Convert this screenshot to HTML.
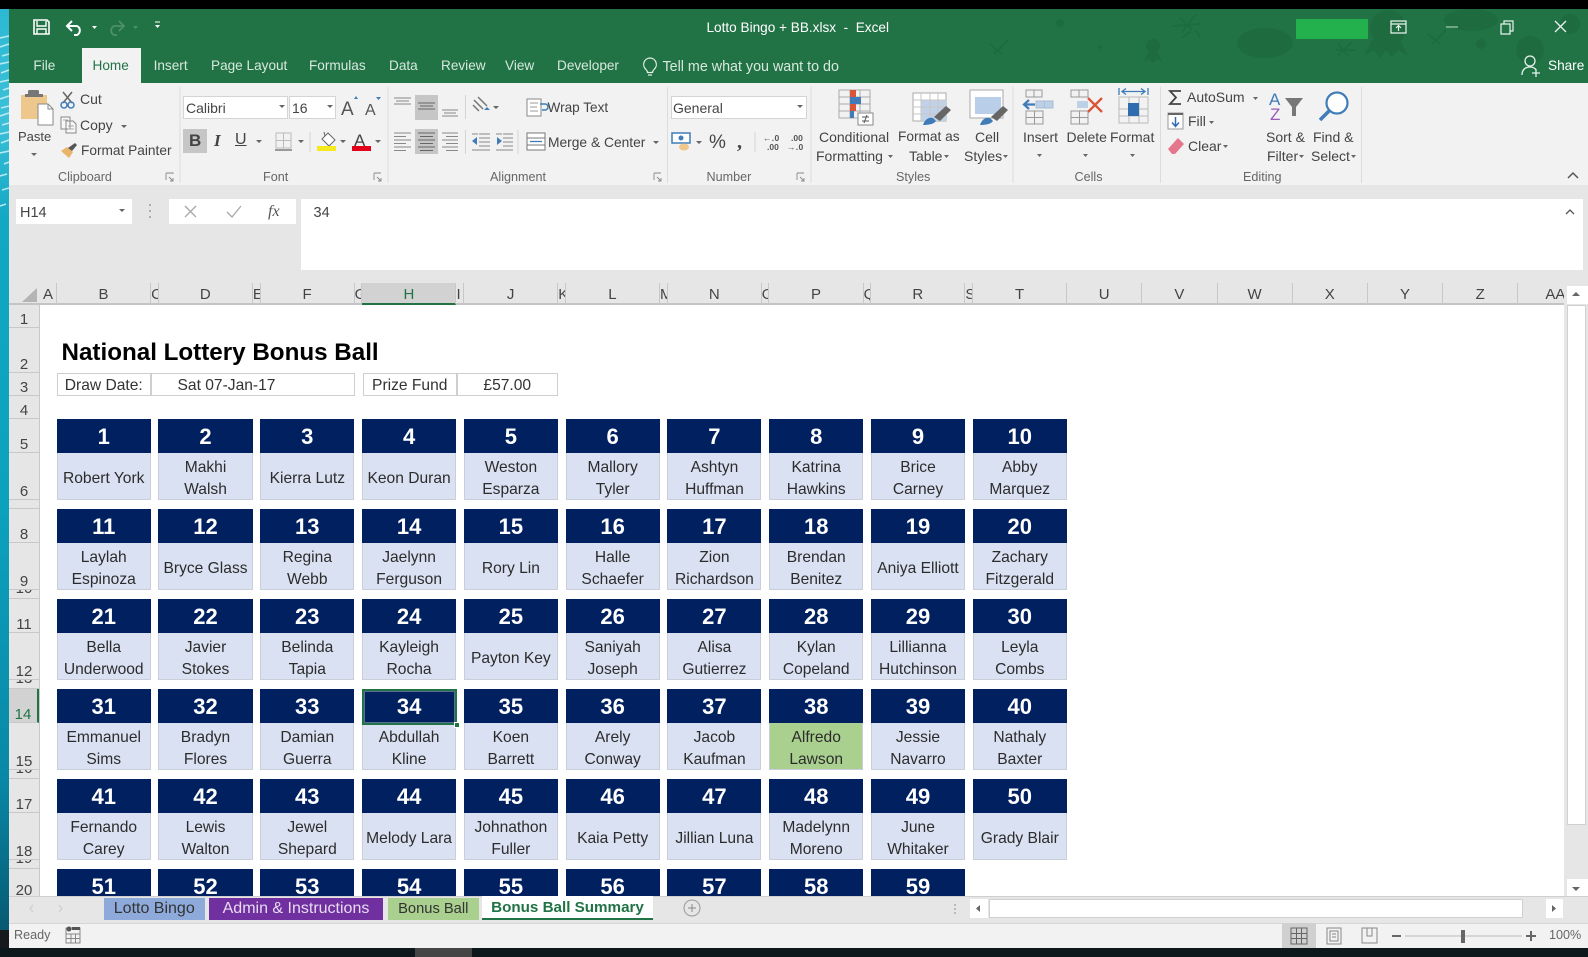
<!DOCTYPE html>
<html><head><meta charset="utf-8"><title>Lotto Bingo + BB.xlsx - Excel</title>
<style>
*{box-sizing:border-box}
html,body{margin:0;padding:0;width:1588px;height:957px;overflow:hidden;background:#000;font-family:"Liberation Sans",sans-serif}
#root{position:relative;width:1588px;height:957px;overflow:hidden;filter:blur(.35px)}
.a{position:absolute}
.t{position:absolute;white-space:nowrap;font-size:14px;line-height:18px;color:#444}
.w{color:#fff}.g{color:#d8e8de}
.l{font-size:12.6px;color:#666}
.k{font-size:13.6px}
#heads{position:absolute;left:40px;top:283px;width:1524px;height:22px;display:flex;overflow:hidden;background:#e6e6e6}
#heads div{flex:none;text-align:center;overflow:hidden;border-right:1px solid #c8c8c8;border-bottom:2px solid #c4c4c4;height:22px;font-size:15px;line-height:24px;color:#444;white-space:nowrap}
#heads .n{width:7.7px;display:flex;justify-content:flex-start}
#heads .m{width:94.1px}
#heads .x{width:75.2px}
#rows{position:absolute;left:9px;top:305px;width:31px;height:591px;overflow:hidden;background:#e6e6e6;border-right:1px solid #c8c8c8}
#rows div{position:absolute;left:0;width:30px;border-bottom:1px solid #c8c8c8;font-size:15px;line-height:14px;color:#444;text-align:center;overflow:hidden;display:flex;align-items:flex-end;justify-content:center}
#rows div.s{align-items:flex-start;padding:0}
#rows .s span{display:block;margin-top:-8px;line-height:14px}
#sheet{position:absolute;left:40px;top:305px;width:1524px;height:591px;overflow:hidden;background:#fff}
#cards{position:absolute;left:16.7px;top:114px;display:grid;grid-template-columns:repeat(10,94.1px);grid-auto-rows:81px;column-gap:7.7px;row-gap:9.1px}
.c{display:flex;flex-direction:column;height:81px}
.c b{display:block;height:34px;background:#002060;color:#fff;font-size:22px;line-height:36px;text-align:center}
.c p{margin:0;height:47px;background:#d9e1f2;border:1px solid #c9ced8;border-top:0;color:#2c2c2c;font-size:15.6px;line-height:22.3px;padding-top:6px;display:flex;align-items:center;justify-content:center;text-align:center}
.c p.h{background:#a9d08e}
.box{position:absolute;background:#fff;border:1px solid #cfcfcf;font-size:15.6px;line-height:24px;color:#333;text-align:center;white-space:nowrap}
.tab{position:absolute;top:898px;height:22px;font-size:16px;line-height:22px;text-align:center;color:#333;white-space:nowrap}
</style></head><body><div id="root">

<!-- wallpaper -->
<div class="a" style="left:0;top:0;width:9px;height:930px;background:linear-gradient(180deg,#2bb8d4 0,#3cc0d8 120px,#12a8c4 220px,#0ca2be 500px,#0888a6 780px,#075a72 930px)"></div>
<div class="a" style="left:0;top:930px;width:9px;height:27px;background:#161a1c"></div>
<div class="a" style="left:0;top:948px;width:1588px;height:9px;background:#0c181c"></div>
<div class="a" style="left:415px;top:948px;width:57px;height:9px;background:#454545"></div>
<div class="a" style="left:0;top:0;width:1588px;height:9px;background:#000"></div>

<!-- title + tabs bar -->
<div class="a" style="left:9px;top:9px;width:1579px;height:74px;background:#217346"></div>
<!-- ribbon -->
<div class="a" style="left:9px;top:83px;width:1579px;height:102px;background:#f2f2f2"></div>
<!-- formula band -->
<div class="a" style="left:9px;top:185px;width:1579px;height:98px;background:#e6e6e6"></div>
<div class="a" style="left:82px;top:48px;width:59px;height:36px;background:#f2f2f2"></div>

<div class="t w" style="left:706.5px;top:19px;font-size:13.6px">Lotto Bingo + BB.xlsx &nbsp;-&nbsp; Excel</div>
<div class="a" style="left:1296px;top:19px;width:72px;height:20px;background:#22b14c"></div>
<div class="t g k" style="left:33.4px;top:57px">File</div>
<div class="t k" style="left:92.5px;top:57px;color:#217346">Home</div>
<div class="t g k" style="left:153.6px;top:57px">Insert</div>
<div class="t g k" style="left:211px;top:57px">Page Layout</div>
<div class="t g k" style="left:309px;top:57px">Formulas</div>
<div class="t g k" style="left:389px;top:57px">Data</div>
<div class="t g k" style="left:441px;top:57px">Review</div>
<div class="t g k" style="left:505px;top:57px">View</div>
<div class="t g k" style="left:557px;top:57px">Developer</div>
<div class="t g" style="left:662.5px;top:58px;font-size:14.3px">Tell me what you want to do</div>
<div class="t w k" style="left:1548px;top:57px">Share</div>

<!-- ribbon text -->
<div class="t" style="left:18px;top:128px;font-size:13px">Paste</div>
<div class="t" style="left:80px;top:90px">Cut</div>
<div class="t" style="left:80px;top:116px">Copy</div>
<div class="t" style="left:81px;top:142px;font-size:13.7px">Format Painter</div>
<div class="t l" style="left:58px;top:168px">Clipboard</div>
<div class="t l" style="left:263px;top:168px">Font</div>
<div class="t l" style="left:490px;top:168px">Alignment</div>
<div class="t l" style="left:706.5px;top:168px">Number</div>
<div class="t l" style="left:896px;top:168px">Styles</div>
<div class="t l" style="left:1074.5px;top:168px">Cells</div>
<div class="t l" style="left:1243px;top:168px">Editing</div>

<div class="a" style="left:183px;top:96px;width:105px;height:23px;background:#fff;border:1px solid #d4d4d4"></div>
<div class="a" style="left:289px;top:96px;width:47px;height:23px;background:#fff;border:1px solid #d4d4d4"></div>
<div class="t" style="left:186px;top:99px">Calibri</div>
<div class="t" style="left:292px;top:99px">16</div>
<div class="a" style="left:183px;top:129px;width:24px;height:24px;background:#c6c6c6"></div>
<div class="a" style="left:415px;top:95px;width:23px;height:25px;background:#c6c6c6"></div>
<div class="a" style="left:415px;top:129px;width:23px;height:25px;background:#c6c6c6"></div>
<div class="t" style="left:189px;top:131px;font-size:17px;line-height:20px;font-weight:bold;color:#444">B</div>
<div class="t" style="left:214px;top:131px;font-size:17px;line-height:20px;font-style:italic;font-weight:bold;font-family:'Liberation Serif',serif;color:#444">I</div>
<div class="t" style="left:235px;top:130px;font-size:16px;line-height:20px;text-decoration:underline;color:#444">U</div>
<div class="t" style="left:547.5px;top:99px;font-size:13.6px">Wrap Text</div>
<div class="t" style="left:548px;top:134px;font-size:13.8px">Merge &amp; Center</div>
<div class="a" style="left:670.5px;top:96px;width:136px;height:23px;background:#fff;border:1px solid #d4d4d4"></div>
<div class="t" style="left:673px;top:99px">General</div>
<div class="t" style="left:709px;top:132px;font-size:19px;line-height:22px">%</div>
<div class="t" style="left:737px;top:131px;font-size:20px;line-height:22px;font-weight:bold;font-family:'Liberation Serif',serif">,</div>
<div class="t" style="left:819px;top:128px">Conditional</div>
<div class="t" style="left:816px;top:146.500px">Formatting</div>
<div class="t" style="left:898px;top:128px;font-size:13.7px">Format as</div>
<div class="t" style="left:909px;top:146.500px">Table</div>
<div class="t" style="left:975px;top:128px">Cell</div>
<div class="t" style="left:964px;top:146.500px">Styles</div>
<div class="t" style="left:1023px;top:128px">Insert</div>
<div class="t" style="left:1066.5px;top:128px">Delete</div>
<div class="t" style="left:1110px;top:128px">Format</div>
<div class="t" style="left:1187px;top:88px">AutoSum</div>
<div class="t" style="left:1188px;top:112px">Fill</div>
<div class="t" style="left:1188px;top:137px">Clear</div>
<div class="t" style="left:1266px;top:128px">Sort &amp;</div>
<div class="t" style="left:1267px;top:146.500px">Filter</div>
<div class="t" style="left:1313px;top:128px">Find &amp;</div>
<div class="t" style="left:1311px;top:146.500px">Select</div>

<!-- formula bar -->
<div class="a" style="left:16px;top:199px;width:116px;height:25px;background:#fff"></div>
<div class="t" style="left:20px;top:204px;font-size:14.5px">H14</div>
<div class="a" style="left:168.5px;top:199px;width:127.5px;height:25px;background:#fff"></div>
<div class="t" style="left:268px;top:203px;font-size:16px;font-style:italic;font-family:'Liberation Serif',serif;color:#555">fx</div>
<div class="a" style="left:301px;top:199px;width:1282px;height:71px;background:#fff"></div>
<div class="t" style="left:313.5px;top:204px;font-size:14.5px">34</div>

<!-- sheet -->
<div id="sheet">
<div id="cards">
<div class="c"><b>1</b><p>Robert York</p></div>
<div class="c"><b>2</b><p>Makhi<br>Walsh</p></div>
<div class="c"><b>3</b><p>Kierra Lutz</p></div>
<div class="c"><b>4</b><p>Keon Duran</p></div>
<div class="c"><b>5</b><p>Weston<br>Esparza</p></div>
<div class="c"><b>6</b><p>Mallory<br>Tyler</p></div>
<div class="c"><b>7</b><p>Ashtyn<br>Huffman</p></div>
<div class="c"><b>8</b><p>Katrina<br>Hawkins</p></div>
<div class="c"><b>9</b><p>Brice<br>Carney</p></div>
<div class="c"><b>10</b><p>Abby<br>Marquez</p></div>
<div class="c"><b>11</b><p>Laylah<br>Espinoza</p></div>
<div class="c"><b>12</b><p>Bryce Glass</p></div>
<div class="c"><b>13</b><p>Regina<br>Webb</p></div>
<div class="c"><b>14</b><p>Jaelynn<br>Ferguson</p></div>
<div class="c"><b>15</b><p>Rory Lin</p></div>
<div class="c"><b>16</b><p>Halle<br>Schaefer</p></div>
<div class="c"><b>17</b><p>Zion<br>Richardson</p></div>
<div class="c"><b>18</b><p>Brendan<br>Benitez</p></div>
<div class="c"><b>19</b><p>Aniya Elliott</p></div>
<div class="c"><b>20</b><p>Zachary<br>Fitzgerald</p></div>
<div class="c"><b>21</b><p>Bella<br>Underwood</p></div>
<div class="c"><b>22</b><p>Javier<br>Stokes</p></div>
<div class="c"><b>23</b><p>Belinda<br>Tapia</p></div>
<div class="c"><b>24</b><p>Kayleigh<br>Rocha</p></div>
<div class="c"><b>25</b><p>Payton Key</p></div>
<div class="c"><b>26</b><p>Saniyah<br>Joseph</p></div>
<div class="c"><b>27</b><p>Alisa<br>Gutierrez</p></div>
<div class="c"><b>28</b><p>Kylan<br>Copeland</p></div>
<div class="c"><b>29</b><p>Lillianna<br>Hutchinson</p></div>
<div class="c"><b>30</b><p>Leyla<br>Combs</p></div>
<div class="c"><b>31</b><p>Emmanuel<br>Sims</p></div>
<div class="c"><b>32</b><p>Bradyn<br>Flores</p></div>
<div class="c"><b>33</b><p>Damian<br>Guerra</p></div>
<div class="c"><b>34</b><p>Abdullah<br>Kline</p></div>
<div class="c"><b>35</b><p>Koen<br>Barrett</p></div>
<div class="c"><b>36</b><p>Arely<br>Conway</p></div>
<div class="c"><b>37</b><p>Jacob<br>Kaufman</p></div>
<div class="c"><b>38</b><p class="h">Alfredo<br>Lawson</p></div>
<div class="c"><b>39</b><p>Jessie<br>Navarro</p></div>
<div class="c"><b>40</b><p>Nathaly<br>Baxter</p></div>
<div class="c"><b>41</b><p>Fernando<br>Carey</p></div>
<div class="c"><b>42</b><p>Lewis<br>Walton</p></div>
<div class="c"><b>43</b><p>Jewel<br>Shepard</p></div>
<div class="c"><b>44</b><p>Melody Lara</p></div>
<div class="c"><b>45</b><p>Johnathon<br>Fuller</p></div>
<div class="c"><b>46</b><p>Kaia Petty</p></div>
<div class="c"><b>47</b><p>Jillian Luna</p></div>
<div class="c"><b>48</b><p>Madelynn<br>Moreno</p></div>
<div class="c"><b>49</b><p>June<br>Whitaker</p></div>
<div class="c"><b>50</b><p>Grady Blair</p></div>
<div class="c"><b>51</b><p></p></div>
<div class="c"><b>52</b><p></p></div>
<div class="c"><b>53</b><p></p></div>
<div class="c"><b>54</b><p></p></div>
<div class="c"><b>55</b><p></p></div>
<div class="c"><b>56</b><p></p></div>
<div class="c"><b>57</b><p></p></div>
<div class="c"><b>58</b><p></p></div>
<div class="c"><b>59</b><p></p></div>
</div>
<div class="a" style="left:322.3px;top:383.5px;width:94.6px;height:36px;border:2px solid #217346;outline:1px solid rgba(255,255,255,.35);outline-offset:-3px"></div>
<div class="a" style="left:413.5px;top:416.5px;width:6px;height:6px;background:#217346;border:1px solid #fff"></div>
<div class="t" style="left:21.5px;top:33px;font-size:24.2px;line-height:30px;font-weight:bold;color:#000">National Lottery Bonus Ball</div>
</div>
<div class="box" style="left:56.5px;top:373px;width:94.5px;height:23px">Draw Date:</div>
<div class="box" style="left:150.5px;top:373px;width:204.5px;height:23px;text-align:left;padding-left:26px">Sat 07-Jan-17</div>
<div class="box" style="left:362.5px;top:373px;width:94.5px;height:23px">Prize Fund</div>
<div class="box" style="left:456.5px;top:373px;width:101.5px;height:23px">£57.00</div>

<!-- column headers -->
<div id="heads">
<div style="width:17px">A</div><div class="m">B</div><div class="n">C</div><div class="m">D</div><div class="n">E</div><div class="m">F</div><div class="n">G</div><div class="m" style="background:#d2d2d2;color:#217346;border-bottom:2px solid #217346">H</div><div class="n">I</div><div class="m">J</div><div class="n">K</div><div class="m">L</div><div class="n">M</div><div class="m">N</div><div class="n">O</div><div class="m">P</div><div class="n">Q</div><div class="m">R</div><div class="n">S</div><div class="m">T</div><div class="x">U</div><div class="x">V</div><div class="x">W</div><div class="x">X</div><div class="x">Y</div><div class="x">Z</div><div class="x">AA</div>
</div>
<div class="a" style="left:9px;top:283px;width:31px;height:22px;background:#e6e6e6;border-bottom:2px solid #c4c4c4"></div>

<!-- row headers -->
<div id="rows">
<div style="top:0;height:23px">1</div>
<div style="top:23px;height:45px">2</div>
<div style="top:68px;height:23px">3</div>
<div style="top:91px;height:23px">4</div>
<div style="top:114px;height:34px">5</div>
<div style="top:148px;height:47px">6</div>
<div style="top:195px;height:9px"></div>
<div style="top:204px;height:34px">8</div>
<div style="top:238px;height:47px">9</div>
<div class="s" style="top:285px;height:9px"><span>10</span></div>
<div style="top:294px;height:34px">11</div>
<div style="top:328px;height:47px">12</div>
<div class="s" style="top:375px;height:9px"><span>13</span></div>
<div style="top:384px;height:34px;background:#d2d2d2;color:#217346;border-right:2px solid #217346">14</div>
<div style="top:418px;height:47px">15</div>
<div class="s" style="top:465px;height:9px"><span>16</span></div>
<div style="top:474px;height:34px">17</div>
<div style="top:508px;height:47px">18</div>
<div class="s" style="top:555px;height:9px"><span>19</span></div>
<div style="top:564px;height:30px">20</div>
</div>

<!-- right scrollbar -->
<div class="a" style="left:1564px;top:283px;width:24px;height:640px;background:#e6e6e6"></div>
<div class="a" style="left:1567px;top:286px;width:21px;height:18px;background:#fff"></div>
<div class="a" style="left:1567px;top:305px;width:19px;height:520px;background:#fff;border:1px solid #d0d0d0"></div>
<div class="a" style="left:1567px;top:879px;width:21px;height:17px;background:#fff"></div>

<!-- tab bar -->
<div class="a" style="left:9px;top:896px;width:1579px;height:27px;background:#e6e6e6;border-top:1px solid #cfcfcf"></div>
<div class="tab" style="left:103.5px;width:101.5px;background:#8eaadb">Lotto Bingo</div>
<div class="tab" style="left:209px;width:174px;background:#7030a0;color:#e8dcf2">Admin &amp; Instructions</div>
<div class="tab" style="left:387.5px;width:91.5px;background:#a9d08e;font-size:14.7px">Bonus Ball</div>
<div class="tab" style="left:482px;top:896px;width:171px;height:24px;background:#fff;color:#217346;font-weight:bold;font-size:15.2px;line-height:24px;border-bottom:2px solid #217346">Bonus Ball Summary</div>
<div class="a" style="left:970px;top:899px;width:18px;height:19px;background:#fff"></div>
<div class="a" style="left:989px;top:899px;width:534px;height:19px;background:#fff;border:1px solid #d0d0d0"></div>
<div class="a" style="left:1546px;top:899px;width:17px;height:19px;background:#fff"></div>

<!-- status bar -->
<div class="a" style="left:9px;top:923px;width:1579px;height:25px;background:#f2f2f2;border-top:1px solid #d6d6d6"></div>
<div class="a" style="left:1281.5px;top:923px;width:34.5px;height:25px;background:#d0d0d0"></div>
<div class="t" style="left:14px;top:926px;font-size:12.6px;color:#666">Ready</div>
<div class="t" style="left:1549px;top:926px;font-size:12.6px;color:#666">100%</div>

<!-- vector overlay -->
<svg class="a" style="left:0;top:0" width="1588" height="957" viewBox="0 0 1588 957" fill="none">
<!-- wallpaper streaks -->
<g stroke="#e6f8fb" stroke-width="1.600" opacity=".75">
<path d="M0 38l9-2M0 47l9-3M2 56l7-2M0 64l9-2M1 73l8-3M0 82l9-2M3 90l6-2M0 99l9-3M1 108l8-2M0 116l9-3M2 125l7-2M0 134l9-2M1 143l8-3M0 153l9-2M4 164l5-2M0 176l7-2M2 190l7-2M0 206l6-2"/>
</g>
<!-- title bar watermark -->
<g fill="#1d6b3f">
<ellipse cx="1265" cy="43" rx="28" ry="15"/><circle cx="1388" cy="28" r="18"/><path d="M1372 40l-8 16 10-6 6 8 6-8 6 8 6-8 10 6-8-16z"/><ellipse cx="1471" cy="20" rx="27" ry="11"/><circle cx="1530" cy="50" r="14"/><circle cx="1153" cy="46" r="7"/><path d="M1148 52l-4 10 5-3 4 4 4-4 5 3-4-10z"/><circle cx="1481" cy="44" r="5"/><circle cx="1060" cy="23" r="4"/><circle cx="1100" cy="47" r="2"/><circle cx="1570" cy="24" r="10"/>
</g>
<g stroke="#1d6b3f" stroke-width="1.800">
<path d="M1180 18l12 12M1196 14l-14 18M1172 26l28-2M1190 32l-8 6M1196 30l4 8"/>
<path d="M1338 44l10 12M1352 42l-14 14M1336 50l20 0"/>
<path d="M1428 34l12 10M1446 30l-14 14"/>
<path d="M990 44l12 10M1008 40l-14 14"/>
</g>
<!-- save -->
<path d="M34 20h13l2 2v12H34z" stroke="#fff" stroke-width="1.6"/><path d="M37 21v5h9v-5M37 34v-5h9v5" stroke="#fff" stroke-width="1.4"/>
<!-- undo/redo/customize -->
<path d="M72 21l-5 5 5 5M67 26h10a5 5 0 0 1 0 9h-3" stroke="#fff" stroke-width="2"/>
<path d="M92 26h5l-2.500 3zM155 25h5l-2.500 3z" fill="#fff"/><path d="M155 22h5" stroke="#fff"/>
<path d="M119 21l5 5-5 5M124 26h-10a5 5 0 0 0 0 9h3" stroke="#4f8f6c" stroke-width="1.800"/>
<path d="M133 26h5l-2.500 3z" fill="#4f8f6c"/>
<!-- window controls -->
<path d="M1391 21h15v12h-15zM1391 24h15M1398.500 31v-5M1396 28l2.500-2.500 2.500 2.500" stroke="#e8f2ec" stroke-width="1.200"/>
<path d="M1446 27h12" stroke="#9cc4ae" stroke-width="1.300"/>
<path d="M1501 24h9v10h-9zM1504 24v-3h9v10h-3" stroke="#e8f2ec" stroke-width="1.200"/>
<path d="M1555 21l11 11M1566 21l-11 11" stroke="#e8f2ec" stroke-width="1.300"/>
<!-- bulb, person -->
<path d="M650 58a6.500 6.500 0 0 1 4 11.500c-1 1-1.500 2-1.500 3h-5c0-1-.5-2-1.500-3A6.500 6.500 0 0 1 650 58zM648 75h4" stroke="#e4efe8" stroke-width="1.200"/>
<circle cx="1530" cy="61" r="5" stroke="#e8f2ec" stroke-width="1.300"/><path d="M1522 75c0-5 3-8 8-8 3 0 5 1 6 3M1532 73h8M1536 69v8" stroke="#e8f2ec" stroke-width="1.300"/>
<!-- paste -->
<path d="M21 95h26v24H21z" fill="#eec78c"/><rect x="28" y="90" width="11" height="7" rx="1.500" fill="#777"/><rect x="25" y="94" width="18" height="3" fill="#777"/>
<path d="M38 104h10l5 5v16H38z" fill="#fff" stroke="#888"/><path d="M48 104v5h5" stroke="#888"/>
<!-- scissors -->
<path d="M63 92l9 11M72 92l-9 11" stroke="#666" stroke-width="1.500"/><circle cx="64" cy="105" r="3" stroke="#3f7cb8" stroke-width="1.500"/><circle cx="71" cy="105" r="3" stroke="#3f7cb8" stroke-width="1.500"/>
<!-- copy -->
<path d="M61 117h9v12h-9zM66 121h7l3 3v9h-10z" fill="#f7f7f7" stroke="#888"/><path d="M68 126h6M68 129h6M63 120h5" stroke="#aaa"/>
<!-- format painter -->
<path d="M61 151l8 7 4-6-6-5z" fill="#e8b568"/><path d="M68 148l7-5 2 2-5 6z" fill="#555"/>
<!-- font grow -->
<text x="341" y="115" font-family="Liberation Sans" font-size="19" fill="#555">A</text><text x="365" y="115" font-family="Liberation Sans" font-size="16" fill="#555">A</text>
<path d="M354 99l2-3 2 3z" fill="#3f7cb8"/><path d="M376 97h5l-2.500 3z" fill="#3f7cb8"/>
<!-- border -->
<path d="M276 133h15v15h-15zM283.500 133v15M276 140.500h15" stroke="#bbb"/><path d="M275 150h17" stroke="#666" stroke-width="1.300"/>
<path d="M310 132v20M465.500 95v24M465.500 130v24M518 130v24M755 132v20" stroke="#d4d4d4"/>
<!-- fill bucket -->
<path d="M328 133l7 7-6 6-7-7z" fill="#fff" stroke="#666"/><path d="M325 136l-1-4" stroke="#666"/>
<rect x="317" y="146" width="19" height="5" fill="#f5ea20"/>
<text x="354" y="146" font-family="Liberation Sans" font-size="17" fill="#444">A</text><rect x="352" y="146" width="19" height="5" fill="#e3001b"/>
<!-- alignment -->
<g stroke="#888" stroke-width="1.100">
<path d="M394 98h17M396 101h13M394 104h17"/><path d="M418 103h17M420 106h13M418 109h17" stroke="#666"/><path d="M442 110h16M444 113h12M442 116h16"/>
<path d="M394 133h17M394 136.500h12M394 140h17M394 143.500h12M394 147h17M394 150.500h12"/>
<path d="M418 133h17M420 136.500h13M418 140h17M420 143.500h13M418 147h17M420 150.500h13" stroke="#666"/>
<path d="M442 133h16M446 136.500h12M442 140h16M446 143.500h12M442 147h16M446 150.500h12"/>
<path d="M479 134h11M479 138h11M479 142h11M479 146h11M472 150h18M472 134h6"/><path d="M503 134h10M503 138h10M503 142h10M503 146h10M496 150h17M496 134h6"/>
</g>
<path d="M472 141l5-4v8zM502 141l-5-4v8z" fill="#3f7cb8"/>
<!-- orientation -->
<path d="M474 100l9 9M478 97l9 9M473 105l6 6" stroke="#777" stroke-width="1.500"/><path d="M484 110h6l-3-3z" fill="#3f7cb8"/>
<!-- wrap -->
<path d="M527 99h14v17h-14z" fill="#fff" stroke="#888"/><path d="M530 103h8M530 107h7M530 111h8" stroke="#999"/><path d="M540 104h5a3 3 0 0 1 0 6h-3" stroke="#3f7cb8" stroke-width="1.500"/>
<!-- merge -->
<path d="M527 133h18v17h-18zM527 138h18M527 145h18" fill="#fff" stroke="#777"/><path d="M530 141.500h12" stroke="#3f7cb8" stroke-width="1.300"/>
<!-- accounting -->
<rect x="672" y="133" width="18" height="10" fill="#fff" stroke="#3f7cb8" stroke-width="1.500"/><circle cx="681" cy="138" r="2.500" fill="#3f7cb8"/><ellipse cx="684" cy="147" rx="5" ry="3.500" fill="#eec78c"/>
<!-- inc/dec -->
<text x="763" y="141" font-family="Liberation Sans" font-size="8.500" fill="#555" font-weight="bold" letter-spacing=".3">←.0</text><text x="767" y="150" font-family="Liberation Sans" font-size="8.500" fill="#555" font-weight="bold">.00</text>
<text x="791" y="141" font-family="Liberation Sans" font-size="8.500" fill="#555" font-weight="bold">.00</text><text x="787" y="150" font-family="Liberation Sans" font-size="8.500" fill="#555" font-weight="bold" letter-spacing=".3">→.0</text>
<!-- conditional formatting -->
<g stroke="#aaa"><path d="M839 90h31v28h-31zM839 97h31M839 104h31M839 111h31M850 90v28M860 90v28"/></g>
<path d="M850 90h6v7h-6zM850 104h6v7h-6z" fill="#d9553a"/><path d="M850 97h11v7h-11zM850 111h4v7h-4z" fill="#3f7cb8"/>
<rect x="858" y="113" width="15" height="12" fill="#fff" stroke="#888"/><path d="M862 117h7M862 121h7M867 115l-3 8" stroke="#555"/>
<!-- format as table -->
<path d="M913 93h33v28h-33z" fill="#fff" stroke="#aaa"/><path d="M921 100h25v21h-25z" fill="#c0d1e8"/><path d="M913 100h33M913 107h33M913 114h33M921 93v28M930 93v28M938 93v28" stroke="#c6c6c6"/>
<path d="M934 117l12-11 5 4-11 11z" fill="#666"/><path d="M923 125c2-6 6-8 10-7l3 3c-2 3-7 4-13 4z" fill="#3f7cb8"/>
<!-- cell styles -->
<path d="M970 90h33v28h-33z" fill="#fff" stroke="#aaa"/><path d="M975 97h26v17h-26z" fill="#b9cfe9"/>
<path d="M991 117l12-11 5 4-11 11z" fill="#666"/><path d="M980 125c2-6 6-8 10-7l3 3c-2 3-7 4-13 4z" fill="#3f7cb8"/>
<!-- insert -->
<path d="M1026 90h16v7h-16zM1034 90v7M1026 111h17v13h-17zM1034.500 111v13M1026 117.500h17" stroke="#999"/>
<path d="M1036 101h17v7h-17zM1044.500 101v7" fill="#bcd0e6" stroke="#a8bdd4"/><path d="M1024 104.500h11M1029 100l-5 4.500 5 4.500" stroke="#3f7cb8" stroke-width="2.200"/>
<!-- delete -->
<path d="M1071 90h17v7h-17zM1079 90v7M1071 111h17v13h-17zM1079.500 111v13M1071 117.500h17" stroke="#999"/>
<path d="M1077 101h11v7h-11z" fill="#bcd0e6"/><path d="M1088 98l14 14M1102 98l-14 14" stroke="#d9553a" stroke-width="2.300"/>
<!-- format -->
<path d="M1119 97h29v26h-29zM1119 109h29M1119 116h29M1129 97v26M1139 97v26" stroke="#bbb"/><rect x="1128" y="103" width="11" height="13" fill="#2f6cb0"/>
<path d="M1119 88v7M1148 88v7M1122 91.500h23M1126 88.500l-4 3 4 3M1141 88.500l4 3-4 3" stroke="#3f7cb8" stroke-width="1.300"/>
<!-- autosum -->
<path d="M1181 91h-11l6 6.500-6 6.500h11" stroke="#444" stroke-width="1.800"/>
<!-- fill -->
<path d="M1168 113h15v16h-15z" fill="#fff" stroke="#999"/><path d="M1168 114h15" stroke="#666" stroke-width="2"/><path d="M1175.500 117v9M1172 122.500l3.500 4 3.500-4" stroke="#2f6cb0" stroke-width="1.500"/>
<!-- clear -->
<path d="M1168 149l10-11 6 6-9 10h-3z" fill="#e4778c"/>
<!-- sort -->
<text x="1269" y="105" font-family="Liberation Sans" font-size="17" fill="#3f7cb8">A</text><text x="1270" y="120" font-family="Liberation Sans" font-size="17" fill="#9a5cb8">Z</text>
<path d="M1285 98h18l-7 9v9l-4 0v-9z" fill="#777"/>
<!-- find -->
<circle cx="1337" cy="103" r="10.500" fill="#fff" stroke="#3f7cb8" stroke-width="2.200"/><path d="M1329 111l-9 9" stroke="#3f7cb8" stroke-width="3.500"/>
<!-- dialog launchers -->
<path d="M166 173h7v1M166 173v7M169 177l4 4M173 178v3h-3" stroke="#888" stroke-width=".9"/>
<path d="M374 173h7M374 173v7M377 177l4 4M381 178v3h-3" stroke="#888" stroke-width=".9"/>
<path d="M654 173h7M654 173v7M657 177l4 4M661 178v3h-3" stroke="#888" stroke-width=".9"/>
<path d="M797 173h7M797 173v7M800 177l4 4M804 178v3h-3" stroke="#888" stroke-width=".9"/>
<!-- group separators -->
<path d="M180 87v96M388 87v96M667.500 87v96M811 87v96M1013 87v96M1160.500 87v96M1361.500 87v96" stroke="#dcdcdc"/>
<!-- small dropdown triangles -->
<path fill="#666" d="M31 153h6l-3 3zM121 125h6l-3 3zM279 105h6l-3 3zM327 105h6l-3 3zM256 140h6l-3 3zM298 140h6l-3 3zM340 140h6l-3 3zM375 140h6l-3 3zM493 106h6l-3 3zM653 141h6l-3 3zM797 105h6l-3 3zM696 141h6l-3 3zM888 155h5l-2.500 3zM944 155h5l-2.500 3zM1003 155h5l-2.500 3zM1037 154h5l-2.500 3zM1083 154h5l-2.500 3zM1130 154h5l-2.500 3zM1253 97h5l-2.500 3zM1209 121h5l-2.500 3zM1223 145h5l-2.500 3zM1299 155h5l-2.500 3zM1351 155h5l-2.500 3zM119 209h6l-3 3z"/>
<path d="M1568 178l5-5 5 5" stroke="#555" stroke-width="1.500"/>
<!-- formula bar controls -->
<path d="M150 204v2M150 210v2M150 216v2" stroke="#999" stroke-width="1.500"/>
<path d="M185 206l11 11M196 206l-11 11" stroke="#a8a8a8" stroke-width="1.300"/>
<path d="M227 212l5 5 9-11" stroke="#a8a8a8" stroke-width="1.300"/>
<path d="M1566 214l4-4 4 4" stroke="#555" stroke-width="1.300"/>
<!-- corner triangle -->
<path d="M37 288v14H22z" fill="#b4b4b4"/>
<!-- scroll arrows -->
<path d="M1572 296l4-4 4 4zM1572 887h8l-4 4z" fill="#666"/>
<path d="M980 905v7l-4-3.500zM1552 905v7l4-3.500z" fill="#666"/>
<path d="M33 905l-3 3.500 3 3.500M59 905l3 3.500-3 3.500" stroke="#cfcfcf" stroke-width="1.300"/>
<path d="M955 904v2M955 908v2M955 912v2" stroke="#aaa" stroke-width="1.500"/>
<circle cx="692" cy="908" r="8" stroke="#999"/><path d="M692 904v8M688 908h8" stroke="#888"/>
<!-- status icons -->
<path d="M66 928h14v15H66zM66 934h14M71 934v9M75.500 934v9M66 938.500h14" stroke="#888"/><circle cx="69" cy="929" r="2.500" fill="#555"/><rect x="72" y="927" width="8" height="3" fill="#555"/>
<path d="M1291 928h16v16h-16zM1291 933.500h16M1291 938.500h16M1296.500 928v16M1301.500 928v16" stroke="#666"/>
<path d="M1327 928h14v16h-14zM1330 931h8v10h-8zM1332 934h4M1332 937h4" stroke="#888"/>
<path d="M1362 928h15v15h-15zM1367 928v8h5v-8" stroke="#888"/>
<path d="M1392 936h9" stroke="#666" stroke-width="2"/><path d="M1405 936h117" stroke="#bbb"/><rect x="1461" y="930" width="4" height="13" fill="#666"/>
<path d="M1526 936h10M1531 931v10" stroke="#666" stroke-width="2"/>
</svg>
</div></body></html>
